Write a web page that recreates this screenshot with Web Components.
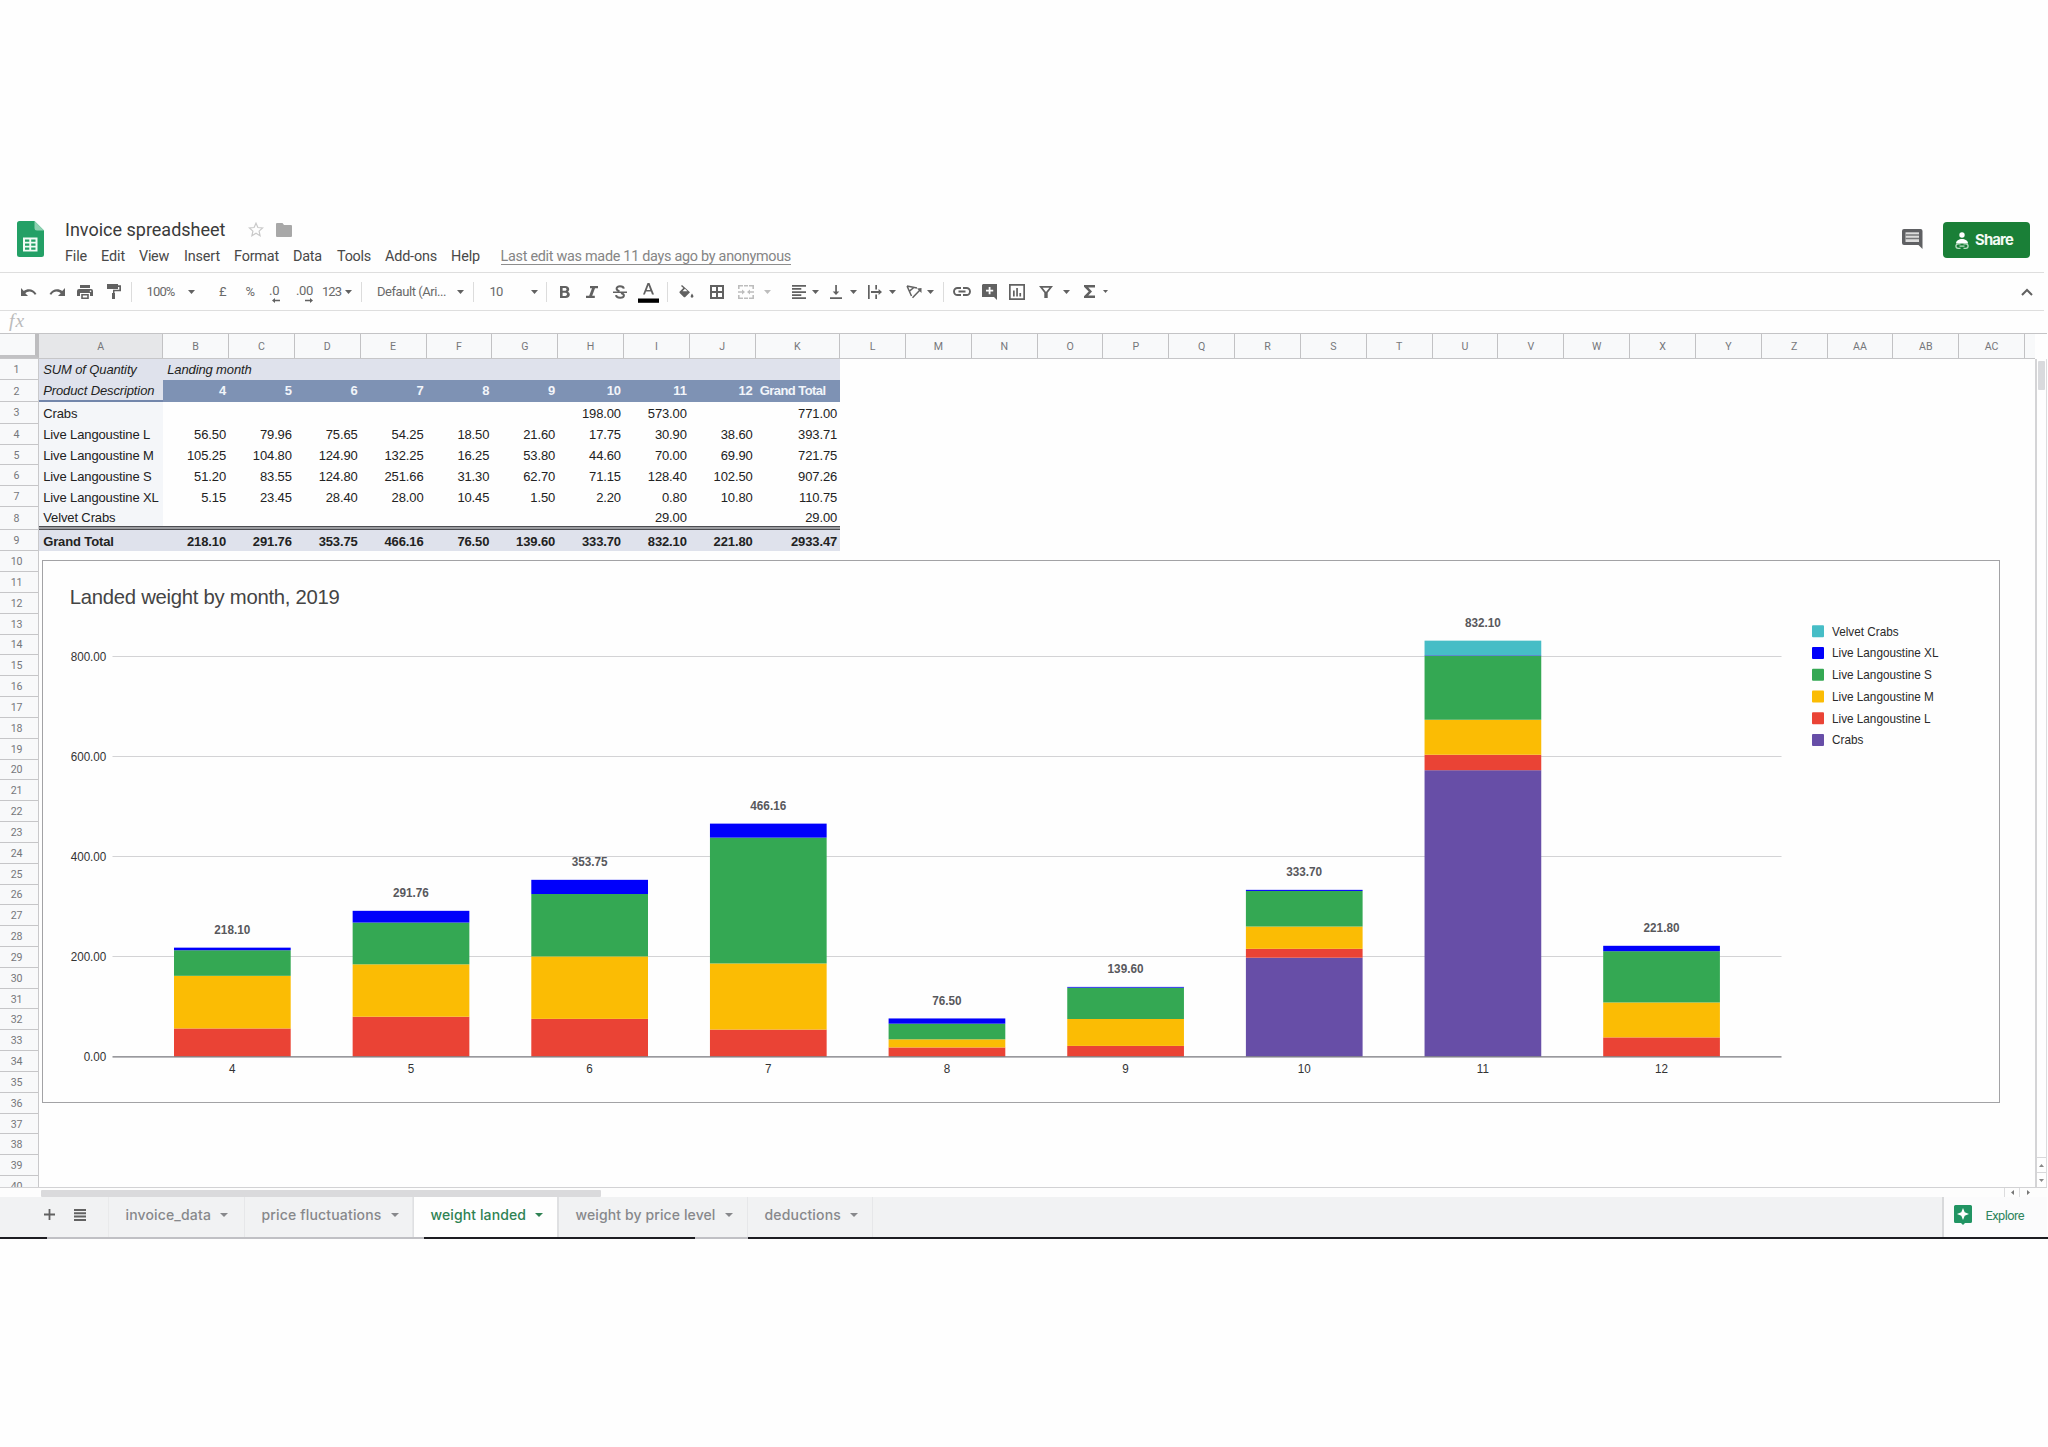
<!DOCTYPE html>
<html lang="en"><head><meta charset="utf-8"><title>Invoice spreadsheet</title>
<style>html,body{margin:0;background:#fefefe;height:1447px;overflow:hidden}body{font-family:Roboto,"Liberation Sans",sans-serif}</style></head>
<body><sheets-app></sheets-app>
<script>
class Base extends HTMLElement{
  connectedCallback(){ if(this.shadowRoot) return; this.attachShadow({mode:'open'}).innerHTML=`<style>${this.css()}</style>${this.html()}`; this.ready&&this.ready(); }
}
// Text run tracked to a given width
class FitText extends Base{
  css(){return `:host{display:inline-block;white-space:pre}`}
  html(){return `<span><slot></slot></span>`}
  ready(){
    const w=+this.getAttribute('w'), s=this.shadowRoot.querySelector('span'), n=this.textContent.length;
    const cur=s.getBoundingClientRect().width;
    this.style.width=w+'px'; if(cur) s.style.letterSpacing=((w-cur)/n)+'px';
  }
}
customElements.define('fit-text',FitText);

const svg=(w,h,b)=>`<svg width="${w}" height="${h}" viewBox="0 0 ${w} ${h}" fill="#616161" stroke="none">${b}</svg>`;
const ICON={
 undo:svg(16,12,'<path d="M0 2v8h7L4.300 7.300C6.500 4.800 11 4.300 13.700 8.700L15.500 8C12.800 2.500 6.500 2 2.800 5z"/>'),
 redo:svg(16,12,'<path d="M16 2v8H9l2.700-2.700C9.500 4.800 5 4.300 2.300 8.700L.5 8C3.200 2.500 9.500 2 13.200 5z"/>'),
 print:svg(16,14,'<path d="M3 0h10v3H3zM2 4h12a2 2 0 0 1 2 2v5h-3V8H3v3H0V6a2 2 0 0 1 2-2z"/><path d="M4.200 9h7.600v5H4.200z"/><path d="M5.800 10.500h4.400v2H5.800z" fill="#fefefe"/><circle cx="13.500" cy="6.200" r=".8" fill="#fefefe"/>'),
 paint:svg(14,15,'<path d="M0 0h11v1.300h3v6H7.500V9H8v6H5V9h1V5.800h6.300V3H11v2H0z"/>'),
 bold:svg(10,12,'<path fill-rule="evenodd" d="M0 0h5.200C7.800 0 9.200 1.300 9.200 3.200c0 1.200-.6 2.100-1.500 2.600C9 6.300 9.800 7.300 9.800 8.600 9.800 10.700 8.200 12 5.700 12H0zM2.600 2v2.800h2.300c2.200 0 2.200-2.800 0-2.800zm0 4.800v3.100H5.300c2.300 0 2.300-3.100 0-3.100z"/>'),
 italic:svg(12,12,'<path d="M4 0h8v2.200H9L6.200 9.800h2.600V12H0V9.800h3.200L6 2.200H4z"/>'),
 strike:svg(14,14,'<path d="M0 6.500h14v1.500H0z"/><path fill="none" stroke="#616161" stroke-width="2" d="M10.800 3.700C10.300.5 3.500.4 3.600 3.600c.1 1.500 1.300 2.200 2.900 2.800M8 8c2 .6 3 1.300 2.900 2.600-.3 3-7.400 2.900-7.900-.4"/>'),
 color:svg(21,20,'<path fill-rule="evenodd" d="M9.500 0h2L16 11.500h-2L12.900 8.600H8L6.900 11.500H5zM8.700 6.900h3.500L10.500 2.300z"/><path d="M0 15.500h21v4.300H0z" fill="#000"/>'),
 fill:svg(15,14,'<path d="M3 0l8 7.200-5 5H5L.5 7.800v-1L4.300 3 2 1z"/><path d="M3.500 6.200h5L5.900 3.700z" fill="#fefefe"/><path d="M13 8.500c2 2.600 1.800 4 .1 4.200-1.700 0-2-1.700-.1-4.200z"/>'),
 borders:svg(14,14,'<path fill-rule="evenodd" d="M0 0h14v14H0zM2 2v4h4V2zm6 0v4h4V2zM2 8v4h4V8zm6 0v4h4V8z"/>'),
 merge:svg(16,14,'<g fill="#bdbdbd"><path d="M0 0h5v1.600H1.600V4H0zM6 0h4v1.600H6zM11 0h5v4h-1.600V1.600H11zM0 10h1.600v2.400H5V14H0zM6 12.400h4V14H6zM14.400 10H16v4h-5v-1.600h3.400zM0 6.200h4V4.500L7 7 4 9.500V7.800H0zM16 6.200h-4V4.500L9 7l3 2.500V7.800h4z"/></g>'),
 align:svg(14,14,'<path d="M0 0h14v1.700H0zM0 3.100h9.300v1.700H0zM0 6.200h14v1.700H0zM0 9.300h9.300V11H0zM0 12.300h14V14H0z"/>'),
 valign:svg(12,14,'<path d="M0 12.200h12V14H0zM5.200 0h1.700v6.500h2.400L6 10 2.700 6.500h2.500z"/>'),
 wrap:svg(14,14,'<path d="M0 0h1.700v14H0zM7.300 0H9v4.500H7.300zM7.300 9.500H9V14H7.300zM3 6.100h7.600V4l3.400 3-3.400 3V7.900H3z"/>'),
 rotate:svg(16,14,'<path fill="none" stroke="#616161" stroke-width="1.500" d="M1 1l4.500 10M1 1l10 2M3.200 6.300L7.800 2.500M6.500 12.800L14 5"/><path d="M15.500 3v5L11 3.400z"/>'),
 link:svg(18,9,'<path fill="none" stroke="#616161" stroke-width="1.900" d="M8 1H4.500a3.500 3.500 0 0 0 0 7H8M10 1h3.500a3.500 3.500 0 0 1 0 7H10M5.500 4.500h7"/>'),
 comment:svg(15,16,'<path d="M1 0h14v16l-3-3H0V1z"/><path fill="#fefefe" d="M6.700 3h1.800v2.700h2.700v1.800H8.500v2.700H6.700V7.500H4V5.700h2.700z"/>'),
 chart:svg(16,16,'<path fill-rule="evenodd" d="M0 0h16v16H0zM1.700 1.700v12.600h12.600V1.700z"/><path d="M4 6.500h1.700V12.500H4zM7.200 4h1.700v8.500H7.200zM10.400 9h1.700v3.500h-1.700z"/>'),
 filter:svg(14,12,'<path fill-rule="evenodd" d="M0 0h14L8.700 6.800V12H5.300V6.800zM3.600 1.700L7 6l3.400-4.300z"/>'),
 sigma:svg(11,13,'<path d="M0 0h11v2.400H4.300L8 6.500l-3.700 4.100H11V13H0v-1.700L4.700 6.500 0 1.700z"/>'),
 tri:svg(7,4,'<path d="M0 0h7L3.500 4z"/>'),
 triL:svg(7,4,'<path d="M0 0h7L3.500 4z" fill="#bdbdbd"/>'),
 tiny:svg(5,3,'<path d="M0 0h5L2.500 3z"/>'),
 sep:'<i class="sep"></i>',
 up:svg(12,8,'<path fill="none" stroke="#616161" stroke-width="2" d="M1 7l5-5 5 5"/>')
};
// Horizontal strip: every item is [left edge, width, markup]; the space between becomes its margin
class UiStrip extends Base{
  css(){return `:host{display:block}.r{display:flex;align-items:center;height:100%}.r>*{flex:none;display:flex;align-items:center;white-space:nowrap}
  svg{display:block;flex:none;overflow:visible}.sep{display:block;width:1px;height:20px;background:#dcdcdc}.c{display:flex;flex-direction:column;height:20px;margin-top:3px}.c span{line-height:15px}.c svg{margin:0 0 0 auto}`}
  html(){let e=0;return `<div class="r">${this.items.map(([x,w,m])=>{const g=x-e;e=x+w;return `<div style="margin-left:${g.toFixed(1)}px;width:${w}px">${m}</div>`}).join('')}</div>`}
}
const t=(w,s)=>`<fit-text w="${w}">${s}</fit-text>`;
class MenuBar extends UiStrip{
  get items(){return [[65,22,'File'],[101,24,'Edit'],[139,30,'View'],[184,36,'Insert'],[234,45,'Format'],[293,29,'Data'],[337,34,'Tools'],[385,52,'Add-ons'],[451,29,'Help']].map(([x,w,s])=>[x,w,t(w,s)]).concat([[500.500,290.500,`<span class="u">${t(290.500,'Last edit was made 11 days ago by anonymous')}</span>`]])}
  css(){return super.css()+`:host{height:22px;font-size:14.400px;color:#484848}.u{color:#858585;border-bottom:1px solid #8d8d8d;line-height:15px;height:15px;margin-top:1px}`}
}
customElements.define('menu-bar',MenuBar);
class ToolBar extends UiStrip{
  get items(){const I=ICON;const ar=p=>svg(8,5,p);return [
  [21,16,I.undo],[49,16,I.redo],[77,16,I.print],[106.500,14,I.paint],[131,1,I.sep],[146.500,28,t(28,'100%')],[188,7,I.tri],[219,8,t(8,'£')],[245.500,10,t(10,'%')],
  [269,15,`<div class="c"><span>${t(10.500,'.0')}</span>${ar('<path d="M0 2.500L3 0v1.700h5v1.600H3V5z"/>')}</div>`],
  [296,18,`<div class="c"><span>${t(17,'.00')}</span>${ar('<path d="M8 2.500L5 0v1.700H0v1.600h5V5z"/>')}</div>`],
  [322,19,t(19,'123')],[344.500,7,I.tri],[361,1,I.sep],[377,69,t(69,'Default (Ari...')],[457,7,I.tri],[473,1,I.sep],[489.500,13,t(13,'10')],[531,7,I.tri],[546,1,I.sep],
  [559.500,10,I.bold],[586,12,I.italic],[613,14,I.strike],[638,21,`<div style="margin-top:3px">${I.color}</div>`],[667,1,I.sep],[679,15,I.fill],[709.500,14,I.borders],[738,16,I.merge],[764,7,I.triL],
  [791.500,14,I.align],[811.500,7,I.tri],[830,12,I.valign],[850,7,I.tri],[868,14,I.wrap],[888.500,7,I.tri],[906,16,I.rotate],[927,7,I.tri],[943,1,I.sep],
  [953,18,I.link],[981.500,15,I.comment],[1009,16,I.chart],[1038.500,14,I.filter],[1063,7,I.tri],[1083.500,11,I.sigma],[1103,5,I.tiny],[2021,12,I.up]]}
  css(){return super.css()+`:host{height:37px;width:2044px;font-size:13px;color:#6a6a6a;border:solid #dedede;border-width:1px 0}`}
}
customElements.define('tool-bar',ToolBar);

class AppHeader extends Base{
  css(){return `:host{display:flex;height:62px}svg{display:block}
  .logo{margin:11px 0 0 16.500px;width:27px}.mid{flex:1;margin-left:-43.500px}.t{display:flex;height:25px;padding:7px 0 0 65px;align-items:center;font-size:18px;color:#3a3a3a}
  .t .s{margin-left:22px}.t .f{margin-left:12px}menu-bar{margin-top:3px}
  .cm{margin:18.500px 20px 0 0}.b{margin:12px 18.500px 0 0;width:87px;height:35.500px;border-radius:4px;background:#1a7f37;display:flex;align-items:center;color:#f4fbf5;font:700 14.800px Inter,sans-serif}
  .b svg{margin:2px 6px 0 12.500px}`}
  html(){return `<div class="logo"><svg width="27" height="36" viewBox="0 0 27 36"><path d="M2.500 0H17.500L27 9.500V33.500a2.500 2.500 0 0 1-2.500 2.500H2.500A2.500 2.500 0 0 1 0 33.500V2.500A2.500 2.500 0 0 1 2.500 0z" fill="#23a066"/><path d="M17.500 0L27 9.500H20a2.500 2.500 0 0 1-2.500-2.500z" fill="#8ed1b1"/><path fill-rule="evenodd" fill="#f1fbf5" d="M6 16.500h14.500v14H6zM8 18.500v2.200h4.300v-2.200zm6.200 0v2.200h4.300v-2.200zM8 22.500v2.200h4.300v-2.200zm6.200 0v2.200h4.300v-2.200zM8 26.500v2.200h4.300v-2.200zm6.200 0v2.200h4.300v-2.200z"/></svg></div>
  <div class="mid"><div class="t">${t(160.500,'Invoice spreadsheet')}<svg class="s" width="16" height="15" viewBox="0 0 16 15"><path d="M8 1.200l1.900 4.300 4.700.4-3.500 3.200 1 4.600L8 11.300l-4.100 2.400 1-4.600L1.400 5.900l4.700-.4z" fill="none" stroke="#c9c9c9" stroke-width="1.200"/></svg><svg class="f" width="16" height="14" viewBox="0 0 16 14"><path d="M1 0h5.500L8 2h7a1 1 0 0 1 1 1v10a1 1 0 0 1-1 1H1a1 1 0 0 1-1-1V1a1 1 0 0 1 1-1z" fill="#a8a8a8"/></svg></div><menu-bar></menu-bar></div>
  <svg class="cm" width="20.500" height="20" viewBox="0 0 20.500 20"><path d="M2 0h16.500a2 2 0 0 1 2 2v18l-4-4H2a2 2 0 0 1-2-2V2a2 2 0 0 1 2-2z" fill="#5f6063"/><path d="M3.500 3.300h13.500v9.700H3.500z" fill="#dcdcdc"/><path d="M3.500 5.300h13.500v1.500H3.500zM3.500 8.800h13.500v1.500H3.500z" fill="#77787a"/></svg>
  <div class="b"><svg width="14" height="18" viewBox="0 0 14 18"><circle cx="7" cy="3" r="2.700" fill="#fff"/><path d="M1 11.500C1 5.500 13 5.500 13 11.500z" fill="#fff"/><path d="M5.500 11.800H3.200a2.300 2.300 0 0 0 0 4.600h2.300M8.500 11.800h2.300a2.300 2.300 0 0 1 0 4.600H8.500M4.500 14.100h5" fill="none" stroke="#b9dcc2" stroke-width="1.300"/></svg>${t(38,'Share')}</div>`}
}
customElements.define('app-header',AppHeader);

const COLS=['A','B','C','D','E','F','G','H','I','J','K','L','M','N','O','P','Q','R','S','T','U','V','W','X','Y','Z','AA','AB','AC'];
const cw=i=>i===0?124:i===10?84.5:65.83;
const RH=[21,22,21.700,21,20.800,20.900,20.900,23.200,20.800]; for(let i=9;i<40;i++)RH.push(20.833);
const DATA=[
 ['SUM of Quantity','Landing month'],
 ['Product Description','4','5','6','7','8','9','10','11','12','Grand Total'],
 ['Crabs','','','','','','','198.00','573.00','','771.00'],
 ['Live Langoustine L','56.50','79.96','75.65','54.25','18.50','21.60','17.75','30.90','38.60','393.71'],
 ['Live Langoustine M','105.25','104.80','124.90','132.25','16.25','53.80','44.60','70.00','69.90','721.75'],
 ['Live Langoustine S','51.20','83.55','124.80','251.66','31.30','62.70','71.15','128.40','102.50','907.26'],
 ['Live Langoustine XL','5.15','23.45','28.40','28.00','10.45','1.50','2.20','0.80','10.80','110.75'],
 ['Velvet Crabs','','','','','','','','29.00','','29.00'],
 ['Grand Total','218.10','291.76','353.75','466.16','76.50','139.60','333.70','832.10','221.80','2933.47']];
class PivotTable extends Base{
  css(){return `:host{display:block;width:801px;font:13px/15px "Liberation Sans",sans-serif;letter-spacing:-.12px;color:#222}
  .r{display:flex}.r>div{flex:none;box-sizing:border-box;padding:0 3px 2.500px;display:flex;align-items:flex-end;justify-content:flex-end;white-space:nowrap}
  .r>div:first-child{justify-content:flex-start;background:#f4f6f9}
  .r0,.r0>div:first-child,.r8,.r8>div:first-child{background:#dfe2ec!important}.r0,.r1>div:first-child{font-style:italic}.r0>div{justify-content:flex-start;padding:0 3px 3px 4px}
  .r2>div,.r3>div{padding-bottom:3px}
  .r1{background:#7e92b4;color:#f2f5fa;font-weight:700}.r1>div:first-child{background:#dfe2ec;color:#222;font-weight:400;border-bottom:2px solid #7286ab}
  .r1>div:last-child{font-weight:700;justify-content:flex-start;letter-spacing:-.55px;padding-left:4px}.r1>div{padding-bottom:4px}.r1>div:first-child{padding-bottom:2px}
  .r7{border-bottom:4px double #4c4d52;box-sizing:border-box;background:linear-gradient(#9b9ca0,#9b9ca0) bottom/100% 4px no-repeat border-box}.r7>div{padding-bottom:1px}.r8{font-weight:700}.r>div:first-child{padding-left:4px}`}
  html(){return DATA.map((r,i)=>`<div class="r r${i}" style="height:${RH[i]}px">${Array.from({length:11},(_,j)=>`<div style="width:${cw(j)}px">${r[j]||''}</div>`).join('')}</div>`).join('')}
}
customElements.define('pivot-table',PivotTable);

const SER=[['Velvet Crabs','#46bdc6'],['Live Langoustine XL','#0000fb'],['Live Langoustine S','#34a853'],['Live Langoustine M','#fbbc04'],['Live Langoustine L','#ea4335'],['Crabs','#674ea7']];
class StackedChart extends Base{
  css(){return `:host{display:block;box-sizing:border-box;width:1958px;height:543px;border:1px solid #a2a2a5;background:#fefefe}svg{display:block;margin:-1px;font-family:"Liberation Sans",sans-serif}`}
  html(){
    const X=42,Y=560,ax=1056.700; let s='';
    // condensed label: glyphs set slightly taller than wide
    const lab=(x,y,str,size,a,ex='')=>`<text transform="translate(${x.toFixed(2)} ${y.toFixed(2)}) scale(.94 1)" text-anchor="${a}" font-size="${size}" ${ex}>${str}</text>`;
    for(const v of [200,400,600,800]) s+=`<path d="M112.500 ${Math.floor(ax-v/2)+.500}H1781.500" stroke="#d3d3d5"/>`;
    for(let v=0;v<=800;v+=200) s+=lab(106.3,ax-v/2+4.4,v+'.00',12.4,'end','fill="#333"');
    for(let c=1;c<=9;c++){
      const x=174+(c-1)*178.650; let y=ax;
      for(let k=2;k<=7;k++){const v=parseFloat(DATA[k][c]||0); if(!v)continue;
        const h=v/2,ci={2:5,3:4,4:3,5:2,6:1,7:0}[k]; s+=`<rect x="${x}" y="${y-h}" width="116.700" height="${h}" fill="${SER[ci][1]}"/>`; y-=h;}
      s+=lab(x+58.3,y-13.9,DATA[8][c],12.5,'middle','font-weight="700" fill="#58585c"')+lab(x+58.3,1072.5,c+3,12.4,'middle','fill="#333"');
    }
    s+=`<path d="M112.500 1056.800H1781.500" stroke="#77777c" stroke-width="1.300"/>`;
    SER.forEach(([n,c],i)=>{const y=625.300+i*21.730; s+=`<rect x="1812" y="${y}" width="12" height="12" rx="1" fill="${c}"/>`+lab(1832,y+10.4,n,12.5,'start','fill="#2a2a2a"')});
    return `<svg width="1958" height="543" viewBox="${X} ${Y} 1958 543"><text x="69.800" y="603.900" font-size="20.300" fill="#444" textLength="270">Landed weight by month, 2019</text>${s}</svg>`;
  }
}
customElements.define('stacked-chart',StackedChart);

class SheetGrid extends Base{
  css(){return `:host{display:flex;flex-direction:column;position:relative;width:2047px;height:854px;border-top:1px solid #c4c4c6;box-sizing:border-box;overflow:hidden;color:#76777a;font-size:10.600px}
  .h{display:flex;height:24px;border-bottom:1px solid #c6c6c8;background:#f8f9fa;flex:none;width:2035px}.h>div{flex:none;box-sizing:border-box;border-right:1px solid #c2c2c4;display:flex;align-items:center;justify-content:center}
  .h .k{width:39.200px;border-right:4px solid #bdbdbf;border-bottom:3px solid #c2c2c4;height:24px}.h .a{background:#e6e7e9}
  .b{display:flex;flex:1;min-height:0}.n{width:39.200px;flex:none;border-right:1px solid #c9c9cb;box-sizing:border-box;background:#f8f9fa;overflow:hidden}
  .n>div{box-sizing:border-box;border-bottom:1px solid #c6c6c8;display:flex;align-items:center;justify-content:center;padding-right:5px;padding-top:1px}
  .m{flex:1;overflow:hidden}.v{width:12px;flex:none;box-sizing:border-box;border-left:2px solid #d4d4d6;border-right:1px solid #dcdcde;display:flex;flex-direction:column;align-items:center}
  .th{width:7px;height:29px;border-radius:1px;background:#d9dadd;margin-top:2px}.sp{flex:1}.ab{height:15px;border-top:1px solid #d8d8da;box-sizing:border-box;width:100%;display:flex;align-items:center;justify-content:center}
  stacked-chart{position:absolute;left:42px;top:226px}`}
  html(){return `<div class="h"><div class="k"></div>${COLS.map((c,i)=>`<div class="${i?'':'a'}" style="width:${cw(i)}px">${c}</div>`).join('')}</div>
  <div class="b"><div class="n">${RH.map((h,i)=>`<div style="height:${h}px">${i+1}</div>`).join('')}</div><div class="m"><pivot-table></pivot-table></div>
  <div class="v"><div class="th"></div><div class="sp"></div><div class="ab">${svg(5,3,'<path d="M0 3h5L2.500 0z" fill="#888"/>')}</div><div class="ab">${svg(5,3,'<path d="M0 0h5L2.500 3z" fill="#888"/>')}</div></div></div><stacked-chart></stacked-chart>`}
}
customElements.define('sheet-grid',SheetGrid);

class SheetTabs extends Base{
  css(){return `:host{display:block;width:2048px}.sc{display:flex;height:10px;border-top:1px solid #d2d2d4;background:#fdfdfd;box-sizing:border-box;width:2047px}
  .th{margin:2px 0 0 41px;width:560px;height:7px;border-radius:1px;background:#dadadc}.sp{flex:1}.ar{width:15px;border-left:1px solid #dcdcde;display:flex;align-items:center;justify-content:center;box-sizing:border-box}.ar:last-child{width:28px;padding-right:11px}
  .b{display:flex;height:39.500px;background:#f1f2f3;width:2047px;font:500 14px Inter,sans-serif;color:#87888b}
  svg{display:block;flex:none}.ic{display:flex;align-items:center;width:109px;box-sizing:border-box;padding-left:44px;gap:19px;border-right:1px solid #e9eaeb;padding-bottom:4px}
  .t{display:flex;align-items:center;box-sizing:border-box;border-right:1px solid #e6e7e9;padding:0 0 4px 16.500px;gap:9px}
  .on{background:#fefefe;color:#2f8253;border-right:2px solid #dfe0e2;border-left:1px solid #dfe0e2}.on svg path{fill:#2f8253}
  .e{width:105px;border-left:2px solid #d8d9db;box-sizing:border-box;background:#fbfbfc;display:flex;align-items:center;font:400 12.800px Roboto,sans-serif;color:#2f8560;padding:0 0 3px 9.500px;gap:14px}
  .ln{display:flex;height:2px}.ln i{background:#1d1d22}.ln .g{background:#c0c0c4}`}
  html(){const tr=svg(8,4,'<path d="M0 0h8L4 4z" fill="#87888b"/>'); const tab=(w,tw,s,c='')=>`<div class="t ${c}" style="width:${w}px">${t(tw,s)}${tr}</div>`;
  return `<div class="sc"><div class="th"></div><div class="sp"></div><div class="ar">${svg(3,5,'<path d="M3 0v5L0 2.500z" fill="#777"/>')}</div><div class="ar">${svg(3,5,'<path d="M0 0v5l3-2.500z" fill="#777"/>')}</div></div>
  <div class="b"><div class="ic">${svg(11,11,'<path d="M4.600 0h1.800v4.600H11v1.800H6.400V11H4.600V6.400H0V4.600h4.600z"/>')}${svg(12,12,'<path d="M0 0h12v2H0zM0 3.300h12v2H0zM0 6.600h12v2H0zM0 9.900h12v2H0z"/>')}</div>
  ${tab(136,85.5,'invoice_data')}${tab(168,120,'price fluctuations')}${tab(146,95.5,'weight landed','on')}${tab(189,140,'weight by price level')}${tab(125,76.5,'deductions')}
  <div class="sp"></div><div class="e"><svg width="18" height="20" viewBox="0 0 18 20"><path d="M1.500 0h15A1.500 1.500 0 0 1 18 1.500v15a1.500 1.500 0 0 1-1.500 1.500H11l-2 2-2-2H1.500A1.500 1.500 0 0 1 0 16.500v-15A1.500 1.500 0 0 1 1.500 0z" fill="#219463"/><path d="M9 3l1.700 4.300L15 9l-4.300 1.700L9 15l-1.700-4.300L3 9l4.300-1.700z" fill="#fff"/></svg>${t(38.500,'Explore')}</div></div>
  <div class="ln"><i style="width:47px"></i><i class="g" style="width:377px"></i><i style="width:271px"></i><i class="g" style="width:53px"></i><i style="flex:1"></i></div>`}
}
customElements.define('sheet-tabs',SheetTabs);

class SheetsApp extends Base{
  css(){return `:host{display:block;padding-top:210px}.fx{height:22px;padding-left:9px;font:italic 19.500px/20px "Liberation Serif",serif;color:#bbb;letter-spacing:1px}`}
  html(){return `<app-header></app-header><tool-bar></tool-bar><div class="fx">fx</div><sheet-grid></sheet-grid><sheet-tabs></sheet-tabs>`}
}
customElements.define('sheets-app',SheetsApp);
</script></body></html>
